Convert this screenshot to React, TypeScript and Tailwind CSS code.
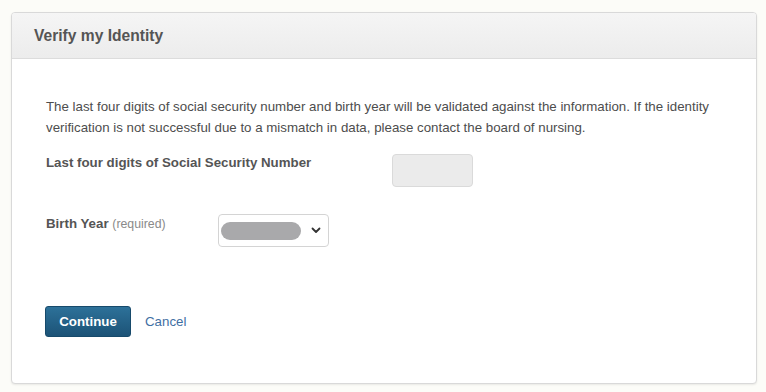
export default function App() {
  return (
    <div className="min-h-screen bg-[#fcfcf8] px-[11px] pt-[12px] font-['Liberation_Sans',Arial,sans-serif]">
      <div className="h-[372px] w-[746px] overflow-hidden rounded-[4px] border border-[#d9d9d9] bg-white shadow-[0_1px_2px_rgba(0,0,0,0.08)]">
        <div className="flex h-[46px] items-center border-b border-[#dcdcdc] bg-gradient-to-b from-[#f5f5f5] to-[#ececec] pl-[22px]">
          <h2 className="text-[15.6px] font-bold text-[#555]">Verify my Identity</h2>
        </div>

        <div className="px-[34px] pt-[37px]">
          <p className="text-[13.3px] leading-[21px] text-[#4d4d4d]">
            The last four digits of social security number and birth year will be validated against the information. If the
            identity verification is not successful due to a mismatch in data, please contact the board of nursing.
          </p>

          <div className="mt-[16px] flex items-start">
            <label className="w-[346px] text-[13.3px] font-bold leading-[18px] text-[#555]">
              Last four digits of Social Security Number
            </label>
            <input
              type="text"
              className="h-[33px] w-[81px] rounded-[4px] border border-[#dadada] bg-[#ebebeb] outline-none"
            />
          </div>

          <div className="mt-[27px] flex items-start">
            <label className="w-[172px] pt-[1px] text-[13.3px] font-bold leading-[18px] text-[#555]">
              Birth Year <span className="text-[12.3px] font-normal text-[#8a8a8a]">(required)</span>
            </label>
            <div className="flex h-[33px] w-[111px] items-center rounded-[4px] border border-[#d4d4d4] bg-white pl-[2px] pr-[7px]">
              <div className="h-[18px] w-[80px] rounded-full bg-[#a9a9ab]" />
              <svg className="ml-auto" width="10" height="7" viewBox="0 0 10 7" fill="none">
                <path d="M1.5 1.5 L5 5 L8.5 1.5" stroke="#333" strokeWidth="1.8" strokeLinecap="round" strokeLinejoin="round" />
              </svg>
            </div>
          </div>

          <div className="-ml-px mt-[59px] flex items-center gap-[14px]">
            <button className="h-[31px] w-[86px] rounded-[3px] border border-[#174a6b] bg-gradient-to-b from-[#2d7199] to-[#1c5377] text-[13.3px] font-bold text-white">
              Continue
            </button>
            <a className="text-[13.3px] text-[#3f6fa3]">Cancel</a>
          </div>
        </div>
      </div>
    </div>
  )
}
